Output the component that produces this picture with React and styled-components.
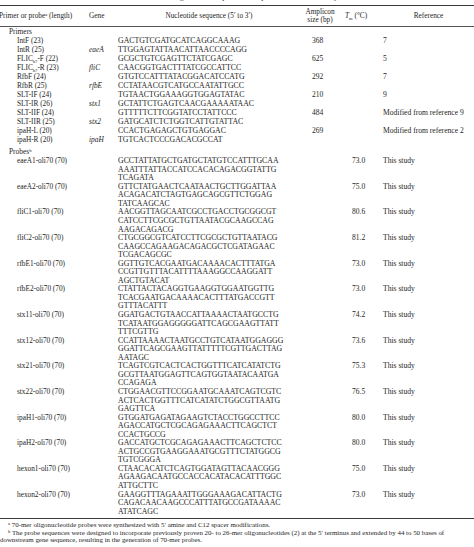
import React from "react";
import styled, { createGlobalStyle } from "styled-components";

const GlobalStyle = createGlobalStyle`
  html, body {
    margin: 0;
    padding: 0;
    background: #fff;
  }
  body {
    font-family: "Liberation Serif", "Times New Roman", serif;
    color: #1e1e1e;
  }
`;

const Page = styled.div`
  width: 474px;
  height: 547px;
  overflow: hidden;
  background: #fff;
`;

const CaptionStrip = styled.div`
  height: 3px;
  overflow: hidden;
  margin-bottom: 1px;
`;

const CaptionText = styled.div`
  margin-top: -8px;
  font-size: 7.8px;
  line-height: 10px;
  text-align: center;
  white-space: nowrap;
`;

const Table = styled.div`
  margin-left: -1px;
  width: 475px;
  margin-top: 2px;
`;

const cols = "90px 29px 182px 40px 43px 91px";

const HeaderRow = styled.div`
  display: grid;
  grid-template-columns: ${cols};
  align-items: center;
  height: 20px;
  border-top: 1.5px solid #3a3a3a;
  border-bottom: 1px solid #555;
  font-size: 7.3px;
  line-height: 8px;
`;

const HeadCell = styled.div`
  text-align: ${(p) => p.$align || "left"};
  padding-left: ${(p) => p.$pad || 0}px;
  white-space: nowrap;
`;

const SectionLabel = styled.div`
  padding-left: 10px;
  font-size: 7.4px;
  line-height: 9px;
  margin-top: ${(p) => p.$top || 0}px;
  margin-bottom: ${(p) => p.$bottom || 0}px;
`;

const PrimerRow = styled.div`
  display: grid;
  grid-template-columns: ${cols};
  height: 9px;
  line-height: 9px;
  font-size: 7.4px;
  white-space: nowrap;
`;

const ProbeRow = styled.div`
  display: grid;
  grid-template-columns: ${cols};
  align-items: start;
  line-height: 8.55px;
  font-size: 7.4px;
  white-space: nowrap;
`;

const Name = styled.div`
  padding-left: 18px;
  font-size: 7.3px;
`;

const Gene = styled.div`
  font-style: italic;
`;

const Seq = styled.div`
  font-size: 7.8px;
`;

const Num = styled.div`
  padding-left: ${(p) => p.$pad || 0}px;
  font-size: 7.5px;
`;

const Ref = styled.div`
  font-size: 7.6px;
`;

const Sub = styled.sub`
  font-size: 4.6px;
  vertical-align: -1.5px;
  line-height: 0;
`;

const Sup = styled.sup`
  font-size: 4.6px;
  vertical-align: 2.5px;
  line-height: 0;
`;

const Footnotes = styled.div`
  border-top: 1.5px solid #3a3a3a;
  margin-top: 1.5px;
  padding-top: 2.8px;
  font-size: 6.9px;
  line-height: 7.2px;
  margin-left: 1px;
`;

const Note = styled.div`
  text-indent: 8px;
  white-space: nowrap;
`;

const primers = [
  { name: "IntF (23)", seq: "GACTGTCGATGCATCAGGCAAAG", amp: "368", ref: "7" },
  { name: "IntR (25)", gene: "eaeA", seq: "TTGGAGTATTAACATTAACCCCAGG" },
  { name: "FLIC", sub: "h7", tail: "-F (22)", seq: "GCGCTGTCGAGTTCTATCGAGC", amp: "625", ref: "5" },
  { name: "FLIC", sub: "h7", tail: "-R (23)", gene: "fliC", seq: "CAACGGTGACTTTATCGCCATTCC" },
  { name: "RfbF (24)", seq: "GTGTCCATTTATACGGACATCCATG", amp: "292", ref: "7" },
  { name: "RfbR (25)", gene: "rfbE", seq: "CCTATAACGTCATGCCAATATTGCC" },
  { name: "SLT-IF (24)", seq: "TGTAACTGGAAAGGTGGAGTATAC", amp: "210", ref: "9" },
  { name: "SLT-IR (26)", gene: "stx1", seq: "GCTATTCTGAGTCAACGAAAAATAAC" },
  { name: "SLT-IIF (24)", seq: "GTTTTTCTTCGGTATCCTATTCCC", amp: "484", ref: "Modified from reference 9" },
  { name: "SLT-IIR (25)", gene: "stx2", seq: "GATGCATCTCTGGTCATTGTATTAC" },
  { name: "ipaH-L (20)", seq: "CCACTGAGAGCTGTGAGGAC", amp: "269", ref: "Modified from reference 2" },
  { name: "ipaH-R (20)", gene: "ipaH", seq: "TGTCACTCCCGACACGCCAT" },
];

const probes = [
  { name: "eaeA1-oli70 (70)", tm: "73.0", seq: ["GCCTATTATGCTGATGCTATGTCCATTTGCAA", "AAATTTATTACCATCCACACAGACGGTATTG", "TCAGATA"] },
  { name: "eaeA2-oli70 (70)", tm: "75.0", seq: ["GTTCTATGAACTCAATAACTGCTTGGATTAA", "ACAGACATCTAGTGAGCAGCGTTCTGGAG", "TATCAAGCAC"] },
  { name: "fliC1-oli70 (70)", tm: "80.6", seq: ["AACGGTTAGCAATCGCCTGACCTGCGGCGT", "CATCCTTCGCGCTGTTAATACGCAAGCCAG", "AAGACAGACG"] },
  { name: "fliC2-oli70 (70)", tm: "81.2", seq: ["CTGCGGCGTCATCCTTCGCGCTGTTAATACG", "CAAGCCAGAAGACAGACGCTCGATAGAAC", "TCGACAGCGC"] },
  { name: "rfbE1-oli70 (70)", tm: "73.0", seq: ["GGTTGTCACGAATGACAAAACACTTTATGA", "CCGTTGTTTACATTTTAAAGGCCAAGGATT", "AGCTGTACAT"] },
  { name: "rfbE2-oli70 (70)", tm: "73.0", seq: ["CTATTACTACAGGTGAAGGTGGAATGGTTG", "TCACGAATGACAAAACACTTTATGACCGTT", "GTTTACATTT"] },
  { name: "stx11-oli70 (70)", tm: "74.2", seq: ["GGATGACTGTAACCATTAAAACTAATGCCTG", "TCATAATGGAGGGGGATTCAGCGAAGTTATT", "TTTCGTTG"] },
  { name: "stx12-oli70 (70)", tm: "73.6", seq: ["CCATTAAAACTAATGCCTGTCATAATGGAGGG", "GGATTCAGCGAAGTTATTTTTCGTTGACTTAG", "AATAGC"] },
  { name: "stx21-oli70 (70)", tm: "75.3", seq: ["TCAGTCGTCACTCACTGGTTTCATCATATCTG", "GCGTTAATGGAGTTCAGTGGTAATACAATGA", "CCAGAGA"] },
  { name: "stx22-oli70 (70)", tm: "76.5", seq: ["CTGGAACGTTCCGGAATGCAAATCAGTCGTC", "ACTCACTGGTTTCATCATATCTGGCGTTAATG", "GAGTTCA"] },
  { name: "ipaH1-oli70 (70)", tm: "80.0", seq: ["GTGGATGAGATAGAAGTCTACCTGGCCTTCC", "AGACCATGCTCGCAGAGAAACTTCAGCTCT", "CCACTGCCG"] },
  { name: "ipaH2-oli70 (70)", tm: "80.0", seq: ["GACCATGCTCGCAGAGAAACTTCAGCTCTCC", "ACTGCCGTGAAGGAAATGCGTTTCTATGGCG", "TGTCGGGA"] },
  { name: "hexon1-oli70 (70)", tm: "75.0", seq: ["CTAACACATCTCAGTGGATAGTTACAACGGG", "AGAAGACAATGCCACCACATACACATTTGGC", "ATTGCTTC"] },
  { name: "hexon2-oli70 (70)", tm: "73.0", seq: ["GAAGGTTTAGAAATTGGGAAAGACATTACTG", "CAGACAACAAGCCCATTTATGCCGATAAAAC", "ATATCAGC"] },
];

export default function App() {
  return (
    <Page>
      <GlobalStyle />
      <CaptionStrip>
        <CaptionText>TABLE 1. Oligonucleotide primers and probes used in this study</CaptionText>
      </CaptionStrip>
      <Table>
        <HeaderRow>
          <HeadCell>
            Primer or probe<Sup>a</Sup> (length)
          </HeadCell>
          <HeadCell>Gene</HeadCell>
          <HeadCell $align="center">Nucleotide sequence (5′ to 3′)</HeadCell>
          <HeadCell $align="center">
            Amplicon
            <br />
            size (bp)
          </HeadCell>
          <HeadCell $pad={5}>
            <i>T</i>
            <Sub>m</Sub> (°C)
          </HeadCell>
          <HeadCell $align="center">Reference</HeadCell>
        </HeaderRow>

        <SectionLabel>Primers</SectionLabel>
        {primers.map((p, i) => (
          <PrimerRow key={i}>
            <Name>
              {p.name}
              {p.sub && <Sub>{p.sub}</Sub>}
              {p.tail}
            </Name>
            <Gene>{p.gene}</Gene>
            <Seq>{p.seq}</Seq>
            <Num $pad={12}>{p.amp}</Num>
            <div />
            <Ref>{p.ref}</Ref>
          </PrimerRow>
        ))}

        <SectionLabel $top={3} $bottom={1.2}>
          Probes<Sup>b</Sup>
        </SectionLabel>
        {probes.map((p, i) => (
          <ProbeRow key={i}>
            <Name>{p.name}</Name>
            <div />
            <Seq>
              {p.seq.map((line, j) => (
                <div key={j}>{line}</div>
              ))}
            </Seq>
            <div />
            <Num $pad={12}>{p.tm}</Num>
            <Ref>This study</Ref>
          </ProbeRow>
        ))}

        <Footnotes>
          <Note>
            <Sup>a</Sup> 70-mer oligonucleotide probes were synthesized with 5′ amine and C12 spacer modifications.
          </Note>
          <Note>
            <Sup>b</Sup> The probe sequences were designed to incorporate previously proven 20- to 26-mer oligonucleotides (2) at the 5′ terminus and extended by 44 to 50 bases of
          </Note>
          <div>downstream gene sequence, resulting in the generation of 70-mer probes.</div>
        </Footnotes>
      </Table>
    </Page>
  );
}
